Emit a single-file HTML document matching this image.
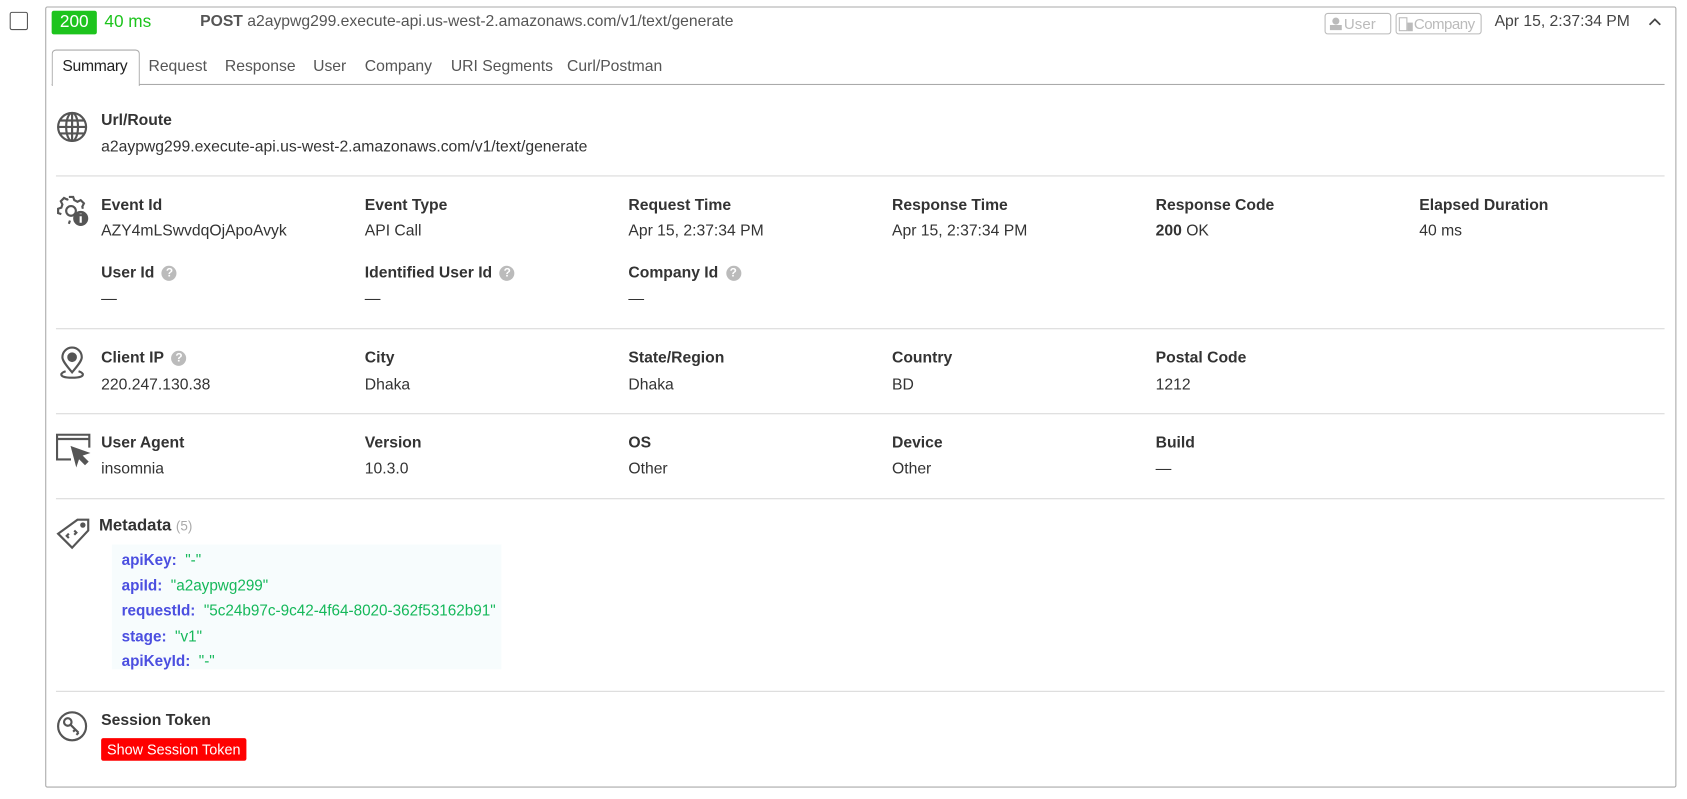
<!DOCTYPE html>
<html><head><meta charset="utf-8"><style>
html,body{margin:0;background:#fff}
body{width:1687px;height:799px;overflow:hidden;position:relative}
#w{position:absolute;left:0;top:0;width:1568px;height:743px;transform:scale(1.076);transform-origin:0 0;font-family:"Liberation Sans",sans-serif;color:#333}
.a{position:absolute;white-space:nowrap}
.l{font-size:14.6px;font-weight:bold;color:#333}
.v{font-size:14.6px;color:#333}
.sep{position:absolute;left:52px;width:1495px;height:1px;background:#d9d9d9}
.q{display:inline-block;width:14px;height:14px;border-radius:50%;background:#bbb;color:#fff;font-size:11px;text-align:center;line-height:14px;font-weight:bold;margin-left:7px;vertical-align:1px}
.tab{position:absolute;top:54px;font-size:14.6px;color:#555}
.mk{color:#4b4fe0;font-weight:bold}
.mv{color:#15b85a}
</style></head><body><div id="w">
<div class="a" style="left:9px;top:11px;width:15px;height:15px;border:1.5px solid #555;border-radius:2px"></div>
<div class="a" style="left:42px;top:6px;width:1514px;height:724px;border:1px solid #aaa;border-radius:2px"></div>
<div class="a" style="left:48px;top:10px;width:42px;height:22px;background:#1dc41d;border-radius:2px;color:#fff;font-size:16px;line-height:22px;text-align:center">200</div>
<div class="a" style="left:97px;top:12px;font-size:16px;color:#1dc41d">40 ms</div>
<div class="a" style="left:186px;top:12px;font-size:14.6px;color:#555"><b>POST</b> a2aypwg299.execute-api.us-west-2.amazonaws.com/v1/text/generate</div>
<div class="a" style="left:1231px;top:12px;width:60px;height:18px;border:1px solid #bbb;border-radius:3px;font-size:14px;color:#bbb;line-height:18px;overflow:hidden"><span style="display:inline-block;width:11px;height:12px;margin:0 2px 0 4px;vertical-align:-1px;background:radial-gradient(circle at 50% 30%,#bbb 3px,transparent 3.5px),linear-gradient(#0000 60%,#bbb 60%)"></span>User</div>
<div class="a" style="left:1297px;top:12px;width:78px;height:18px;border:1px solid #bbb;border-radius:3px;font-size:14px;color:#bbb;line-height:18px;overflow:hidden;letter-spacing:-0.5px"><span style="display:inline-block;width:6px;height:11px;border:1px solid #bbb;margin:0 0 0 2px;vertical-align:-2px"></span><span style="display:inline-block;width:5px;height:8px;background:#bbb;vertical-align:-2px;margin-right:1px"></span>Company</div>
<div class="a" style="left:1389px;top:12px;font-size:14.6px;color:#444">Apr 15, 2:37:34 PM</div>
<svg class="a" style="left:1532px;top:16px" width="12" height="8"><path d="M1 7L6 2L11 7" fill="none" stroke="#444" stroke-width="1.6"/></svg>
<div class="a" style="left:48px;top:78px;width:1499px;height:1px;background:#aaa"></div>
<div class="a" style="left:48px;top:46px;width:80px;height:33px;border:1px solid #aaa;border-bottom:none;border-radius:4px 4px 0 0;background:#fff"></div>
<div class="tab" style="left:58px;color:#222;letter-spacing:-0.3px">Summary</div>
<div class="tab" style="left:138px">Request</div>
<div class="tab" style="left:209px">Response</div>
<div class="tab" style="left:291px">User</div>
<div class="tab" style="left:339px">Company</div>
<div class="tab" style="left:419px">URI Segments</div>
<div class="tab" style="left:527px">Curl/Postman</div>

<svg class="a" style="left:52px;top:103px" width="30" height="30" viewBox="0 0 30 30" fill="none" stroke="#555" stroke-width="2"><circle cx="15" cy="15" r="13"/><ellipse cx="15" cy="15" rx="5.5" ry="13"/><path d="M2 15H28M4 9H26M4 21H26M15 2V28"/></svg>
<div class="a l" style="left:94px;top:104px">Url/Route</div>
<div class="a v" style="left:94px;top:129px">a2aypwg299.execute-api.us-west-2.amazonaws.com/v1/text/generate</div>
<div class="sep" style="top:163px"></div>

<svg class="a" style="left:52px;top:181px" width="32" height="30" viewBox="0 0 32 30" fill="none" stroke="#555" stroke-width="2"><path d="M12 2h4l1 3 3 1.5 3-1.5 3 3-1.5 3 .5 2M5 18l-3-1v-4l3-1 1-3-1.5-3 3-3 3 1.5 1-.5M13 24l-1 3"/><circle cx="14" cy="15" r="4.5"/><circle cx="23" cy="22" r="7" fill="#555" stroke="none"/><path d="M23 20v6M23 17.5v.5" stroke="#fff"/></svg>
<div class="a l" style="left:94px;top:183px">Event Id</div><div class="a v" style="left:94px;top:207px">AZY4mLSwvdqOjApoAvyk</div>
<div class="a l" style="left:339px;top:183px">Event Type</div><div class="a v" style="left:339px;top:207px">API Call</div>
<div class="a l" style="left:584px;top:183px">Request Time</div><div class="a v" style="left:584px;top:207px">Apr 15, 2:37:34 PM</div>
<div class="a l" style="left:829px;top:183px">Response Time</div><div class="a v" style="left:829px;top:207px">Apr 15, 2:37:34 PM</div>
<div class="a l" style="left:1074px;top:183px">Response Code</div><div class="a v" style="left:1074px;top:207px"><b>200</b> OK</div>
<div class="a l" style="left:1319px;top:183px">Elapsed Duration</div><div class="a v" style="left:1319px;top:207px">40 ms</div>
<div class="a l" style="left:94px;top:246px">User Id<span class="q">?</span></div><div class="a v" style="left:94px;top:270px">—</div>
<div class="a l" style="left:339px;top:246px">Identified User Id<span class="q">?</span></div><div class="a v" style="left:339px;top:270px">—</div>
<div class="a l" style="left:584px;top:246px">Company Id<span class="q">?</span></div><div class="a v" style="left:584px;top:270px">—</div>
<div class="sep" style="top:305px"></div>

<svg class="a" style="left:54px;top:322px" width="26" height="32" viewBox="0 0 26 32" fill="none" stroke="#555" stroke-width="2"><path d="M13 24C7 17 4 13 4 10a9 9 0 0118 0c0 3-3 7-9 14z"/><circle cx="13" cy="10" r="3.5" fill="#555"/><path d="M7 23c-3 1-4 2-4 3 0 2 4 3 10 3s10-1 10-3c0-1-1-2-4-3"/></svg>
<div class="a l" style="left:94px;top:325px">Client IP<span class="q">?</span></div><div class="a v" style="left:94px;top:350px">220.247.130.38</div>
<div class="a l" style="left:339px;top:325px">City</div><div class="a v" style="left:339px;top:350px">Dhaka</div>
<div class="a l" style="left:584px;top:325px">State/Region</div><div class="a v" style="left:584px;top:350px">Dhaka</div>
<div class="a l" style="left:829px;top:325px">Country</div><div class="a v" style="left:829px;top:350px">BD</div>
<div class="a l" style="left:1074px;top:325px">Postal Code</div><div class="a v" style="left:1074px;top:350px">1212</div>
<div class="sep" style="top:384px"></div>

<svg class="a" style="left:52px;top:403px" width="34" height="32" viewBox="0 0 34 32" fill="none" stroke="#555" stroke-width="2"><path d="M14 24H1V1h30v12M1 5h30"/><path d="M15 13l14 5-6 2 6 6-2 2-6-6-2 6z" fill="#555"/></svg>
<div class="a l" style="left:94px;top:404px">User Agent</div><div class="a v" style="left:94px;top:428px">insomnia</div>
<div class="a l" style="left:339px;top:404px">Version</div><div class="a v" style="left:339px;top:428px">10.3.0</div>
<div class="a l" style="left:584px;top:404px">OS</div><div class="a v" style="left:584px;top:428px">Other</div>
<div class="a l" style="left:829px;top:404px">Device</div><div class="a v" style="left:829px;top:428px">Other</div>
<div class="a l" style="left:1074px;top:404px">Build</div><div class="a v" style="left:1074px;top:428px">—</div>
<div class="sep" style="top:463px"></div>

<svg class="a" style="left:52px;top:481px" width="32" height="32" viewBox="0 0 32 32" fill="none" stroke="#555" stroke-width="2"><path d="M20 2h10v10L15 28 2 15z"/><circle cx="25" cy="7" r="1.5" fill="#555"/><path d="M12 15l-2 2 2 2M17 12l2 2-2 2"/></svg>
<div class="a" style="left:92px;top:480px;font-size:15.5px;font-weight:bold;color:#333">Metadata <span style="font-weight:normal;color:#aaa;font-size:12.5px">(5)</span></div>
<div class="a" style="left:104px;top:506px;width:362px;height:116px;background:#f7fcfd"></div>
<div class="a" style="left:113px;top:510px;font-size:14.2px;line-height:23.5px">
<div><span class="mk">apiKey:</span>&nbsp; <span class="mv">"-"</span></div>
<div><span class="mk">apiId:</span>&nbsp; <span class="mv">"a2aypwg299"</span></div>
<div><span class="mk">requestId:</span>&nbsp; <span class="mv">"5c24b97c-9c42-4f64-8020-362f53162b91"</span></div>
<div><span class="mk">stage:</span>&nbsp; <span class="mv">"v1"</span></div>
<div><span class="mk">apiKeyId:</span>&nbsp; <span class="mv">"-"</span></div>
</div>
<div class="sep" style="top:642px"></div>

<svg class="a" style="left:52px;top:660px" width="30" height="30" viewBox="0 0 30 30" fill="none" stroke="#555" stroke-width="2"><circle cx="15" cy="15" r="13"/><circle cx="11" cy="11" r="3.5"/><path d="M13.5 13.5L21 21M18 18l-2 2M21 21l-2 2"/></svg>
<div class="a l" style="left:94px;top:662px">Session Token</div>
<div class="a" style="left:94px;top:686px;width:135px;height:21px;background:#f00;border-radius:2px;color:#fff;font-size:13.4px;line-height:21px;text-align:center">Show Session Token</div>
</div></body></html>
